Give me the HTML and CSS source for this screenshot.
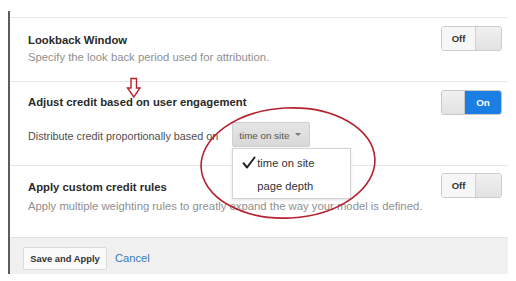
FILE: index.html
```html
<!DOCTYPE html>
<html>
<head>
<meta charset="utf-8">
<link rel="stylesheet" href="styles.css">
</head>
<body>
<div class="page">
  <div class="panel">
    <div class="top-strip"></div>

    <div class="section s1">
      <div class="text">
        <div class="title">Lookback Window</div>
        <div class="desc">Specify the look back period used for attribution.</div>
      </div>
      <div class="toggle off">
        <span class="label">Off</span><span class="knob"></span>
      </div>
    </div>

    <div class="section s2">
      <div class="text">
        <div class="title">Adjust credit based on user engagement</div>
        <div class="row">
          <span class="body">Distribute credit proportionally based on</span>
          <div class="select-wrap">
            <div class="select">time on site<span class="caret"></span></div>
            <div class="menu">
              <div class="item checked"><svg class="check" width="14" height="14" viewBox="0 0 14 14"><path d="M1.5 7.2 L5 11.5 L12.5 1.5" fill="none" stroke="#222" stroke-width="2" stroke-linecap="round" stroke-linejoin="round"/></svg>time on site</div>
              <div class="item">page depth</div>
            </div>
          </div>
        </div>
      </div>
      <div class="toggle on">
        <span class="knob"></span><span class="label">On</span>
      </div>
    </div>

    <div class="section s3">
      <div class="text">
        <div class="title">Apply custom credit rules</div>
        <div class="desc">Apply multiple weighting rules to greatly expand the way your model is defined.</div>
      </div>
      <div class="toggle off">
        <span class="label">Off</span><span class="knob"></span>
      </div>
    </div>

    <div class="footer">
      <button class="btn">Save and Apply</button>
      <a class="cancel">Cancel</a>
    </div>
  </div>

  <svg class="annot" width="516" height="281" viewBox="0 0 516 281">
    <path d="M131 78.5 L136.5 78.5 L136.5 88 L140 88 L133.8 97 L127.5 88 L131 88 Z" fill="none" stroke="#b8222f" stroke-width="1.4" stroke-linejoin="miter"/>
    <ellipse cx="288" cy="163" rx="87" ry="55" transform="rotate(-3 288 163)" fill="none" stroke="#b3222e" stroke-width="1.6"/>
  </svg>
</div>
</body>
</html>
```

FILE: styles.css
```css
* { box-sizing: border-box; }
html, body { margin: 0; padding: 0; background: #fff; }
body {
  font-family: "Liberation Sans", Arial, sans-serif;
  font-size: 11.3px;
  color: #2c2c2c;
}
.page {
  position: relative;
  width: 516px;
  height: 281px;
  padding: 11px 0 0 8px;
}
.panel {
  width: 500px;
  border-left: 2px solid #5c5c5c;
}
.top-strip { height: 6px; }

.section {
  display: flex;
  justify-content: space-between;
  align-items: flex-start;
  border-top: 1px solid #e6e6e6;
  padding-left: 18px;
  padding-right: 6px;
}
.s1 { padding-top: 8px; padding-bottom: 17px; }
.s1 .text { margin-top: 7px; }
.s2 { padding-top: 8px; padding-bottom: 18px; }
.s2 .text { margin-top: 5px; }
.s3 { padding-top: 7px; padding-bottom: 24px; }
.s3 .text { margin-top: 7px; }

.title {
  font-weight: bold;
  line-height: 14px;
  color: #2a2a2a;
}
.desc {
  margin-top: 3px;
  line-height: 14px;
  color: #8f8f8f;
}
.s3 .desc { margin-top: 5px; }

.row {
  margin-top: 13px;
  display: flex;
  align-items: center;
  height: 25px;
}
.body { color: #4e4e4e; line-height: 14px; padding-top: 3px; font-size: 10.8px; }
.select-wrap {
  position: relative;
  margin-left: 14px;
}
.select {
  width: 78px;
  height: 25px;
  border: 1px solid #cfcfcf;
  border-radius: 2px;
  background: linear-gradient(#e4e4e4, #d9d9d9);
  color: #555;
  font-size: 9.8px;
  line-height: 25px;
  padding-left: 6px;
  position: relative;
}
.caret {
  position: absolute;
  right: 8px;
  top: 10px;
  width: 0;
  height: 0;
  border-left: 3px solid transparent;
  border-right: 3px solid transparent;
  border-top: 3px solid #777;
}
.menu {
  position: absolute;
  left: 0;
  top: 26px;
  width: 119px;
  height: 51px;
  background: #fff;
  border: 1px solid #d4d4d4;
  box-shadow: 0 1px 3px rgba(0,0,0,0.12);
  padding-top: 3px;
  z-index: 2;
}
.item {
  position: relative;
  height: 23px;
  line-height: 23px;
  padding-left: 24px;
  color: #333;
  font-size: 11.2px;
}
.check {
  position: absolute;
  left: 9px;
  top: 4px;
}

.toggle {
  display: flex;
  width: 61px;
  height: 25px;
  border: 1px solid #cdcdcd;
  border-radius: 3px;
  overflow: hidden;
  font-size: 9.5px;
  font-weight: bold;
  flex-shrink: 0;
}
.toggle.off .label {
  width: 34px;
  background: #f7f7f7;
  color: #333;
  text-align: center;
  line-height: 23px;
  border-right: 1px solid #d0d0d0;
}
.toggle.off .knob {
  flex: 1;
  background: linear-gradient(#f0f0f0, #e2e2e2);
}
.toggle.on { border-color: #c8c8c8; }
.toggle.on .knob {
  width: 23px;
  background: linear-gradient(#f0f0f0, #e2e2e2);
  border-right: 1px solid #c8c8c8;
}
.toggle.on .label {
  flex: 1;
  background: #1a7ee2;
  color: #fff;
  text-align: center;
  line-height: 23px;
  font-size: 9.8px;
}

.footer {
  border-top: 1px solid #e2e2e2;
  background: #f0f0f0;
  height: 37px;
  padding: 9px 0 0 13px;
  display: flex;
  align-items: flex-start;
}
.btn {
  width: 84px;
  height: 23px;
  border: 1px solid #dadada;
  border-radius: 2px;
  background: #fafafa;
  font-family: "Liberation Sans", Arial, sans-serif;
  font-size: 9.4px;
  font-weight: bold;
  color: #333;
  padding: 0;
}
.cancel {
  margin-left: 8px;
  line-height: 23px;
  color: #3d78b8;
  font-size: 11.2px;
}

.annot {
  position: absolute;
  left: 0;
  top: 0;
  pointer-events: none;
  z-index: 5;
}
```
